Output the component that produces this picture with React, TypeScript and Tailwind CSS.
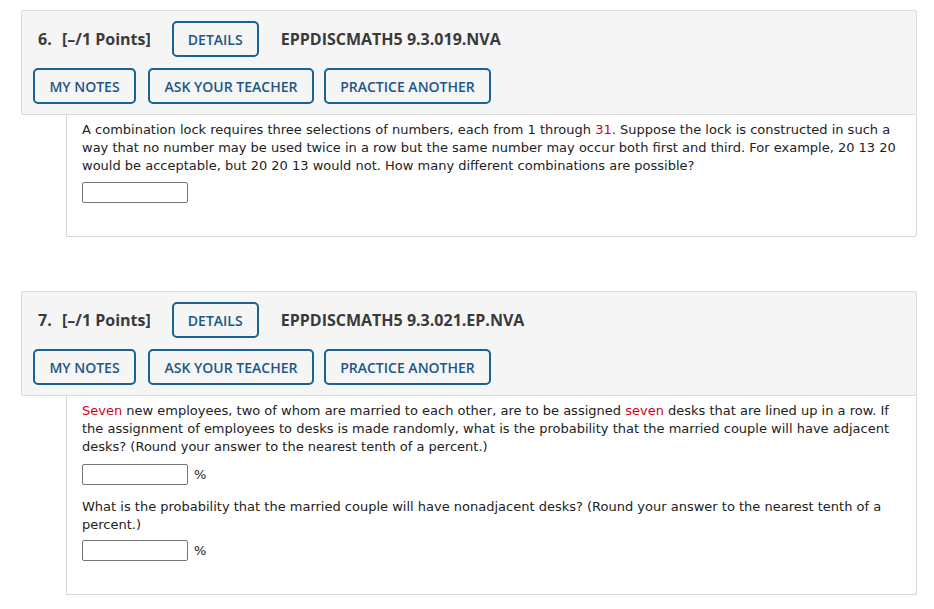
import React from "react";

const btn =
  "h-[36px] px-0 rounded-[5px] border-2 border-[#1a6294] text-[#1d5784] text-[14px] font-semibold uppercase whitespace-nowrap bg-transparent flex items-center justify-center";

function Header({ num, code }: { num: string; code: string }) {
  return (
    <div className="bg-[#f5f5f5] border border-[#dcdcdc] rounded-[2px] pt-[10px] pb-[10px] pl-[11px] pr-[11px]" style={{ fontFamily: '"Open Sans", sans-serif' }}>
      <div className="flex items-center h-[36px]">
        <span className="ml-[5px] text-[16px] font-bold text-[#3a3a3a] w-[24px]">{num}</span>
        <span className="text-[16px] font-bold text-[#3a3a3a]">[–/1 Points]</span>
        <button className={btn + " ml-[21px] w-[87px]"}>Details</button>
        <span className="ml-[22px] text-[16px] font-bold text-[#3a3a3a]">{code}</span>
      </div>
      <div className="flex items-center mt-[11px]">
        <button className={btn + " w-[103px]"}>My Notes</button>
        <button className={btn + " ml-[12px] w-[166px]"}>Ask Your Teacher</button>
        <button className={btn + " ml-[10px] w-[167px]"}>Practice Another</button>
      </div>
    </div>
  );
}

const inputCls = "w-[106px] h-[21px] border border-[#767676] rounded-[2px] bg-white";

export default function App() {
  return (
    <div className="bg-white w-[934px] h-[609px] pl-[21px] pr-[17px] pt-[10px]" style={{ fontFamily: '"DejaVu Sans", Verdana, sans-serif' }}>
      <Header num="6." code="EPPDISCMATH5 9.3.019.NVA" />
      <div className="ml-[45px] border-l border-r border-b border-[#d6d6d6] rounded-br-[3px] pl-[15px] pr-[15px] pt-[6px] pb-[33px] text-[13px] leading-[18px] text-[#222]">
        <p>
          A combination lock requires three selections of numbers, each from 1 through{" "}
          <span className="text-[#d0021b]">31</span>. Suppose the lock is constructed in such a way that no number may be used twice in a row but the same number may occur both first and third. For example, 20 13 20 would be acceptable, but 20 20 13 would not. How many different combinations are possible?
        </p>
        <div className="mt-[7px]">
          <div className={inputCls} />
        </div>
      </div>

      <div className="mt-[54px]">
        <Header num="7." code="EPPDISCMATH5 9.3.021.EP.NVA" />
        <div className="ml-[45px] border-l border-r border-b border-[#d6d6d6] rounded-br-[3px] pl-[15px] pr-[15px] pt-[6px] pb-[33px] text-[13px] leading-[18px] text-[#222]">
          <p>
            <span className="text-[#d0021b]">Seven</span> new employees, two of whom are married to each other, are to be assigned{" "}
            <span className="text-[#d0021b]">seven</span> desks that are lined up in a row. If the assignment of employees to desks is made randomly, what is the probability that the married couple will have adjacent desks? (Round your answer to the nearest tenth of a percent.)
          </p>
          <div className="mt-[8px] flex items-center gap-[6px]">
            <div className={inputCls} />
            <span>%</span>
          </div>
          <p className="mt-[13px]">
            What is the probability that the married couple will have nonadjacent desks? (Round your answer to the nearest tenth of a percent.)
          </p>
          <div className="mt-[6px] flex items-center gap-[6px]">
            <div className={inputCls} />
            <span>%</span>
          </div>
        </div>
      </div>
    </div>
  );
}
